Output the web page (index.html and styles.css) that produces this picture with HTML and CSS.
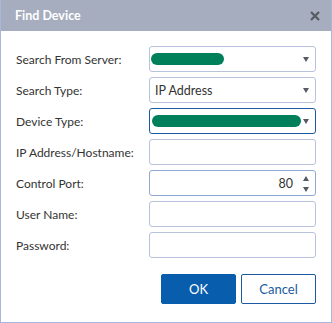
FILE: index.html
```html
<!DOCTYPE html>
<html>
<head>
<meta charset="utf-8">
<link rel="stylesheet" href="styles.css">
</head>
<body>
<div class="dialog">
  <div class="titlebar">
    <span class="title">Find Device</span>
    <svg class="close" width="10" height="10" viewBox="0 0 10 10"><path d="M1 1L9 9M9 1L1 9" stroke="#555a63" stroke-width="2.2"/></svg>
  </div>
  <div class="form">
    <label class="lbl">Search From Server:</label>
    <div class="field select"><span class="pill pill-short"></span><span class="arrow"></span></div>

    <label class="lbl">Search Type:</label>
    <div class="field select"><span class="val">IP Address</span><span class="arrow"></span></div>

    <label class="lbl">Device Type:</label>
    <div class="field select focus"><span class="pill pill-long"></span><span class="arrow"></span></div>

    <label class="lbl">IP Address/Hostname:</label>
    <div class="field"></div>

    <label class="lbl">Control Port:</label>
    <div class="field number"><span class="num">80</span><span class="spin"><span class="up"></span><span class="down"></span></span></div>

    <label class="lbl">User Name:</label>
    <div class="field"></div>

    <label class="lbl">Password:</label>
    <div class="field"></div>
  </div>
  <div class="buttons">
    <button class="btn ok">OK</button>
    <button class="btn cancel">Cancel</button>
  </div>
</div>
</body>
</html>
```

FILE: styles.css
```css
html, body {
  margin: 0;
  padding: 0;
  background: #ffffff;
}
.dialog {
  width: 332px;
  height: 323px;
  box-sizing: border-box;
  border: 1px solid #a9b6dc;
  border-top: none;
  font-family: Lato, "Liberation Sans", Arial, sans-serif;
  font-size: 12px;
  color: #333333;
  display: flex;
  flex-direction: column;
}
.titlebar {
  height: 31px;
  background: #a5adbe;
  display: flex;
  align-items: center;
  justify-content: space-between;
  padding: 0 11px 0 14px;
  box-sizing: border-box;
}
.title {
  color: #ffffff;
  font-weight: bold;
  font-size: 12.5px;
}
.close {
  display: block;
}
.form {
  display: grid;
  grid-template-columns: 133px 167px;
  grid-auto-rows: 26px;
  row-gap: 5px;
  padding: 15px 0 0 15px;
  align-items: center;
}
.lbl {
  color: #333333;
}
.field {
  height: 26px;
  box-sizing: border-box;
  border: 1px solid #b9c2dc;
  border-radius: 3px;
  background: #fff;
  display: flex;
  align-items: center;
  position: relative;
}
.field.focus {
  border-color: #1b5a9e;
}
.select .arrow {
  position: absolute;
  right: 6px;
  top: 10px;
  width: 0;
  height: 0;
  border-left: 3.5px solid transparent;
  border-right: 3.5px solid transparent;
  border-top: 5px solid #555a63;
}
.val {
  padding-left: 5px;
  color: #333;
  font-size: 12.5px;
}
.pill {
  display: block;
  height: 12px;
  border-radius: 6px;
  background: #00805a;
  margin-left: 1px;
}
.pill-short {
  width: 73px;
}
.pill-long {
  width: 149px;
  margin-left: 2px;
}
.number {
  border-color: #8fa8d4;
  justify-content: flex-end;
}
.num {
  margin-right: 22px;
  color: #333;
  font-size: 12.5px;
}
.spin {
  position: absolute;
  right: 6px;
  top: 5px;
  display: flex;
  flex-direction: column;
  gap: 6px;
}
.up {
  width: 0; height: 0;
  border-left: 3.5px solid transparent;
  border-right: 3.5px solid transparent;
  border-bottom: 5px solid #555a63;
}
.down {
  width: 0; height: 0;
  border-left: 3.5px solid transparent;
  border-right: 3.5px solid transparent;
  border-top: 5px solid #555a63;
}
.buttons {
  display: flex;
  justify-content: flex-end;
  gap: 5px;
  padding: 16px 15px 0 0;
}
.btn {
  width: 75px;
  height: 30px;
  box-sizing: border-box;
  border-radius: 2px;
  font-family: Lato, "Liberation Sans", Arial, sans-serif;
  font-size: 13px;
  cursor: pointer;
}
.ok {
  background: #085ead;
  border: 1px solid #085ead;
  color: #ffffff;
}
.cancel {
  background: #ffffff;
  border: 1px solid #1b5a9e;
  color: #1b5a9e;
}
```
